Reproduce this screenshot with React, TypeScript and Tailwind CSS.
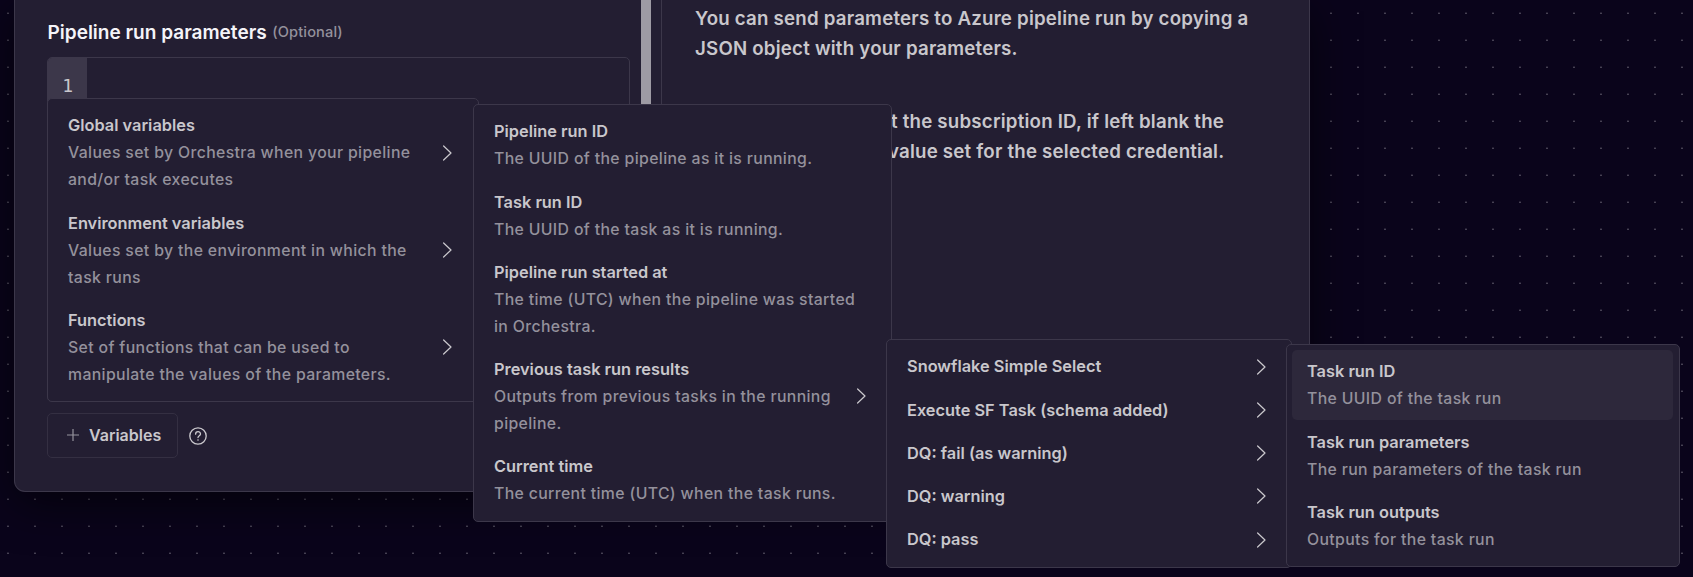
type MenuItem = {
  title: string;
  description?: string[];
  hasChildren?: boolean;
  active?: boolean;
};

const variableGroups: MenuItem[] = [
  {
    title: "Global variables",
    description: ["Values set by Orchestra when your pipeline", "and/or task executes"],
    hasChildren: true,
  },
  {
    title: "Environment variables",
    description: ["Values set by the environment in which the", "task runs"],
    hasChildren: true,
  },
  {
    title: "Functions",
    description: ["Set of functions that can be used to", "manipulate the values of the parameters."],
    hasChildren: true,
  },
];

const globalVariables: MenuItem[] = [
  { title: "Pipeline run ID", description: ["The UUID of the pipeline as it is running."] },
  { title: "Task run ID", description: ["The UUID of the task as it is running."] },
  {
    title: "Pipeline run started at",
    description: ["The time (UTC) when the pipeline was started", "in Orchestra."],
  },
  {
    title: "Previous task run results",
    description: ["Outputs from previous tasks in the running", "pipeline."],
    hasChildren: true,
  },
  { title: "Current time", description: ["The current time (UTC) when the task runs."] },
];

const tasks: MenuItem[] = [
  { title: "Snowflake Simple Select", hasChildren: true },
  { title: "Execute SF Task (schema added)", hasChildren: true },
  { title: "DQ: fail (as warning)", hasChildren: true },
  { title: "DQ: warning", hasChildren: true },
  { title: "DQ: pass", hasChildren: true },
];

const taskValues: MenuItem[] = [
  { title: "Task run ID", description: ["The UUID of the task run"], active: true },
  { title: "Task run parameters", description: ["The run parameters of the task run"] },
  { title: "Task run outputs", description: ["Outputs for the task run"] },
];

function Chevron() {
  return (
    <svg className="size-[18px] shrink-0" viewBox="0 0 18 18" fill="none" stroke="#cbc9ce" strokeWidth="1.2">
      <path d="M3.6 2 11 9l-7.4 7" strokeLinecap="round" strokeLinejoin="round" />
    </svg>
  );
}

function Menu({ items, className }: { items: MenuItem[]; className: string }) {
  return (
    <ul className={`absolute rounded-[5px] border border-[#3c374a] bg-[#231e32] pt-[5.3px] pb-[5.6px] pl-[5px] ${className}`}>
      {items.map((item) => (
        <li
          key={item.title}
          className={`flex items-center justify-between rounded-[5px] px-[15px] py-[8.1px] whitespace-nowrap ${
            item.active ? "bg-[#2d283b]" : ""
          }`}
        >
          <div>
            <div className="text-[16.35px] leading-[27px] font-semibold text-[#c9c7cc]">{item.title}</div>
            {item.description?.map((line) => (
              <div key={line} className="text-[15.8px] leading-[27px] font-medium tracking-[0.023em] text-[#94919c]">
                {line}
              </div>
            ))}
          </div>
          {item.hasChildren && <Chevron />}
        </li>
      ))}
    </ul>
  );
}

export default function App() {
  return (
    <main className="relative h-[577px] w-[1693px] overflow-hidden bg-[#0a041b] bg-[radial-gradient(circle_at_8px_13.3px,#464153_0.6px,transparent_1.2px)] bg-[size:27px_27px] pl-3.5 font-[Inter,sans-serif]">
      <section className="flex h-[492px] w-[1296px] rounded-b-[11px] border border-t-0 border-[#3c374a] bg-[#231e32] shadow-[0_11px_45px_rgba(0,0,0,0.6)]">
        {/* Form column */}
        <div className="flex w-[626px] shrink-0 flex-col pt-[18px] pl-8">
          <h2 className="flex items-center gap-[5.5px] pl-[0.5px] text-[19.05px] leading-[30px] font-semibold text-[#f5f4f9]">
            Pipeline run parameters
            <span className="pb-0.5 text-[14.6px] leading-7 font-medium tracking-[0.01em] text-[#94919c]">(Optional)</span>
          </h2>
          <div className="mt-[9px] flex h-[345px] w-[583px] overflow-hidden rounded-[5px] border border-[#3c374a]">
            <div className="w-[39px] bg-[#3c374a] pt-3.5 pr-3.5 text-right font-['DejaVu_Sans_Mono',monospace] text-lg leading-[27px] text-[#c9c7cc]">
              1
            </div>
          </div>
          <div className="mt-[11px] flex items-center gap-[11px]">
            <button className="flex h-[45px] w-[131px] items-center gap-[9px] rounded-[5px] border border-[#342f42] pb-px pl-[18px] text-base font-semibold text-[#c9c7cc]">
              <svg className="size-[14px]" viewBox="0 0 14 14" stroke="#96939d" strokeWidth="1.2">
                <path d="M1 7h12M7 1v12" />
              </svg>
              Variables
            </button>
            <svg className="size-[18px]" viewBox="0 0 18 18" fill="none" stroke="#cbc9ce" strokeWidth="1.3">
              <circle cx="9" cy="9" r="8.2" />
              <path d="M6.6 7.2C6.6 3.9 11.5 4 11.5 6.9 11.5 8.8 9 8.6 9 10.6" strokeLinecap="round" />
              <circle cx="9" cy="13" r="0.8" fill="#cbc9ce" stroke="none" />
            </svg>
          </div>
        </div>
        <div className="h-full w-2.5 bg-[#9e9ba4]" />

        {/* Help column */}
        <div className="ml-2.5 flex-1 border-l border-[#3c374a] pt-1 pl-[33px] text-[18.7px] leading-[30px] font-semibold tracking-[0.011em] whitespace-nowrap text-[#c9c7cc]">
          <p>
            You can send parameters to Azure pipeline run by copying a
            <br />
            JSON object with your parameters.
          </p>
          <p className="mt-[43px] pl-[196px]">t the subscription ID, if left blank the</p>
          <p className="pl-[193px]">value set for the selected credential.</p>
        </div>
      </section>

      <Menu items={variableGroups} className="top-[98px] left-[47px] w-[432px] pr-[5px]" />
      <Menu items={globalVariables} className="top-[104px] left-[473px] w-[419px] pr-1" />
      <Menu items={tasks} className="top-[339px] left-[886px] w-[406px] pr-1" />
      <Menu items={taskValues} className="top-[344px] left-[1286px] w-[394px] pr-1.5" />
    </main>
  );
}
